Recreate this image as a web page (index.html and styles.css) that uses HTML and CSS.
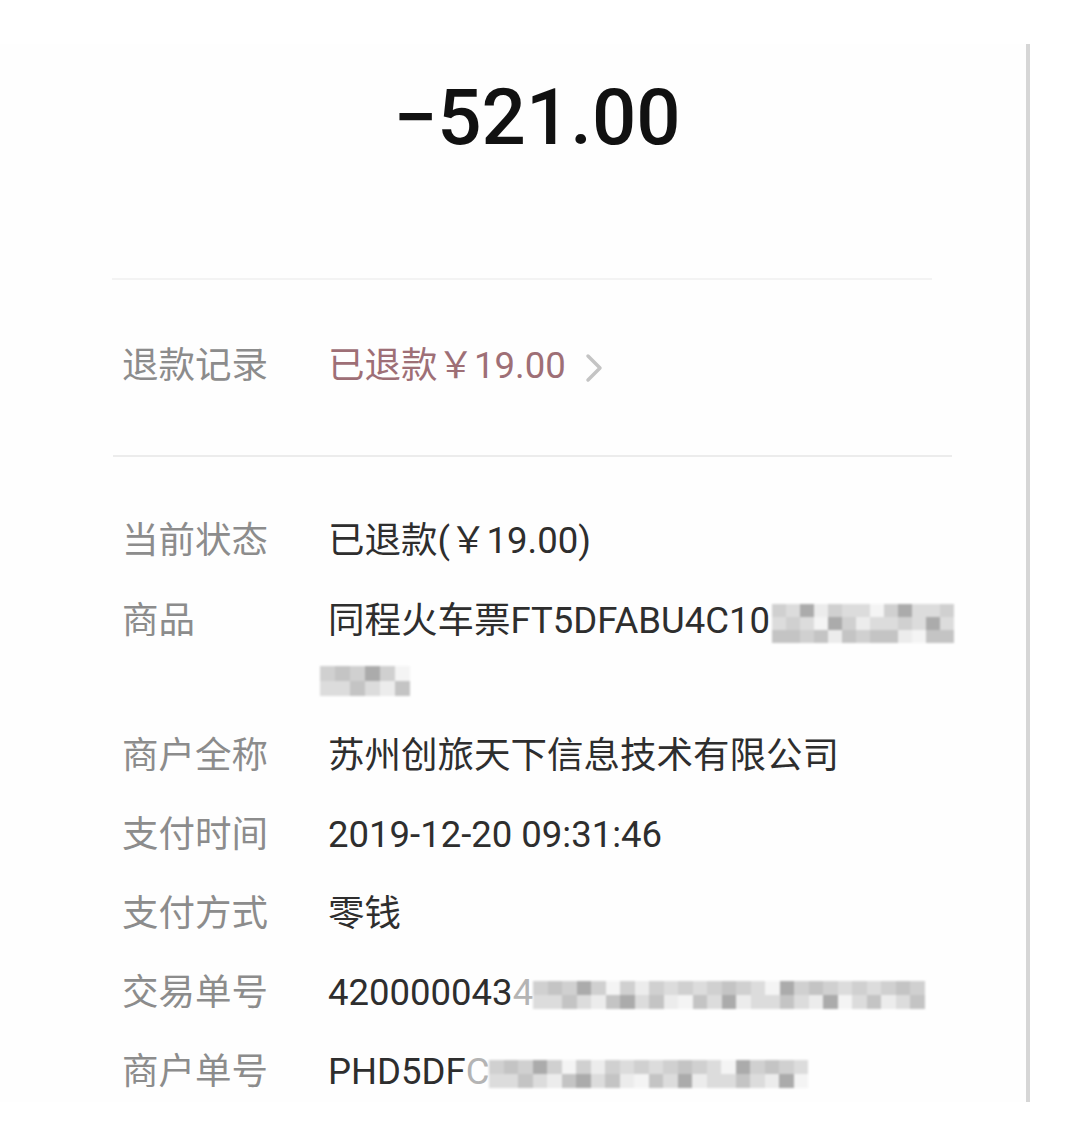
FILE: index.html
```html
<!DOCTYPE html>
<html lang="zh">
<head>
  <meta charset="UTF-8">
  <title>账单详情</title>
  <link rel="stylesheet" href="styles.css">
</head>
<body>

  <div class="page">
    <div class="panel">

      <div class="amount">−521.00</div>

      <div class="divider top"></div>

      <div class="refund">
        <span class="label">退款记录</span>
        <span class="refund-value">已退款￥19.00</span>
        <svg class="chevron" width="20" height="32" viewBox="0 0 20 32">
          <polyline points="4,4 16,16 4,28" fill="none" stroke="#c4c4c4" stroke-width="3.5" stroke-linecap="round" stroke-linejoin="round"/>
        </svg>
      </div>

      <div class="divider"></div>

      <div class="details">
        <div class="row tall">
          <span class="label">当前状态</span>
          <span class="value">已退款(￥19.00)</span>
        </div>
        <div class="row short">
          <span class="label">商品</span>
          <span class="value">同程火车票FT5DFABU4C10<span class="mosaic m1"><i></i><i></i><i></i><i></i><i></i><i></i><i></i><i></i><i></i><i></i><i></i><i></i><i></i><i></i><i></i><i></i><i></i><i></i><i></i><i></i><i></i><i></i><i></i><i></i><i></i><i></i><i></i><i></i><i></i><i></i><i></i><i></i><i></i><i></i><i></i><i></i><i></i><i></i><i></i></span><br><span class="mosaic m2"><i></i><i></i><i></i><i></i><i></i><i></i><i></i><i></i><i></i><i></i><i></i><i></i></span></span>
        </div>
        <div class="row">
          <span class="label">商户全称</span>
          <span class="value">苏州创旅天下信息技术有限公司</span>
        </div>
        <div class="row">
          <span class="label">支付时间</span>
          <span class="value">2019-12-20 09:31:46</span>
        </div>
        <div class="row">
          <span class="label">支付方式</span>
          <span class="value">零钱</span>
        </div>
        <div class="row">
          <span class="label">交易单号</span>
          <span class="value">420000043<span class="fade">4</span><span class="mosaic m3"><i></i><i></i><i></i><i></i><i></i><i></i><i></i><i></i><i></i><i></i><i></i><i></i><i></i><i></i><i></i><i></i><i></i><i></i><i></i><i></i><i></i><i></i><i></i><i></i><i></i><i></i><i></i><i></i><i></i><i></i><i></i><i></i><i></i><i></i><i></i><i></i><i></i><i></i><i></i><i></i><i></i><i></i><i></i><i></i><i></i><i></i><i></i><i></i><i></i><i></i><i></i><i></i><i></i><i></i></span></span>
        </div>
        <div class="row">
          <span class="label">商户单号</span>
          <span class="value">PHD5DF<span class="fade">C</span><span class="mosaic m4"><i></i><i></i><i></i><i></i><i></i><i></i><i></i><i></i><i></i><i></i><i></i><i></i><i></i><i></i><i></i><i></i><i></i><i></i><i></i><i></i><i></i><i></i><i></i><i></i><i></i><i></i><i></i><i></i><i></i><i></i><i></i><i></i><i></i><i></i><i></i><i></i><i></i><i></i><i></i><i></i><i></i><i></i><i></i><i></i></span></span>
        </div>
      </div>

    </div>
  </div>

</body>
</html>
```

FILE: styles.css
```css
body {
  margin: 0;
  background: #ffffff;
  font-family: Roboto, "Noto Sans CJK SC", sans-serif;
}

.page {
  padding-top: 44px;
  height: 1090px;
}

.panel {
  width: 1030px;
  height: 1058px;
  background: #fefefe;
  border-right: 4px solid #d6d6d6;
  box-sizing: border-box;
}

.amount {
  padding-top: 30px;
  padding-left: 48px;
  height: 234px;
  box-sizing: border-box;
  text-align: center;
  font-size: 78px;
  line-height: 88px;
  font-weight: 500;
  color: #111;
}

.divider {
  height: 2px;
  margin: 0 74px 0 113px;
  background: #ececec;
}

.divider.top {
  margin: 0 94px 0 112px;
  background: #f3f3f3;
}

.refund {
  display: flex;
  align-items: center;
  padding: 57px 0 60px 122px;
  font-size: 36.5px;
  line-height: 58px;
}

.label {
  width: 206px;
  flex-shrink: 0;
  color: #8c8c8c;
}

.refund-value {
  color: #9e6f76;
}

.chevron {
  margin-left: 18px;
  margin-top: 4px;
}

.details {
  padding: 55px 0 0 122px;
  font-size: 36.5px;
  line-height: 58px;
}

.row {
  display: flex;
  margin-bottom: 21px;
}

.row.tall {
  margin-bottom: 22px;
}

.row.short {
  margin-bottom: 19px;
}

.value {
  color: #2e2e2e;
}

.fade {
  color: #b4b4b4;
}

.mosaic {
  display: inline-grid;
  grid-template-rows: 15px 15px;
  grid-auto-flow: column;
  grid-auto-columns: 14px;
  vertical-align: middle;
  line-height: 0;
  filter: blur(1px);
}

.mosaic i {
  background: #dcdcdc;
}

.mosaic i:nth-child(3n) { background: #c4c4c4; }
.mosaic i:nth-child(5n) { background: #ececec; }
.mosaic i:nth-child(7n) { background: #ababab; }
.mosaic i:nth-child(4n+1) { background: #d0d0d0; }
.mosaic i:nth-child(11n) { background: #f4f4f4; }

.m1 {
  margin-left: 2px;
  grid-template-rows: 13px 13px 13px;
  grid-auto-columns: 14px;
}

.m2 {
  margin-left: -8px;
  grid-auto-columns: 15px;
}

.m3 {
  grid-auto-columns: 14.5px;
  grid-template-rows: 14px 14px;
}

.m4 {
  grid-auto-columns: 14.5px;
  grid-template-rows: 14px 14px;
}
```
